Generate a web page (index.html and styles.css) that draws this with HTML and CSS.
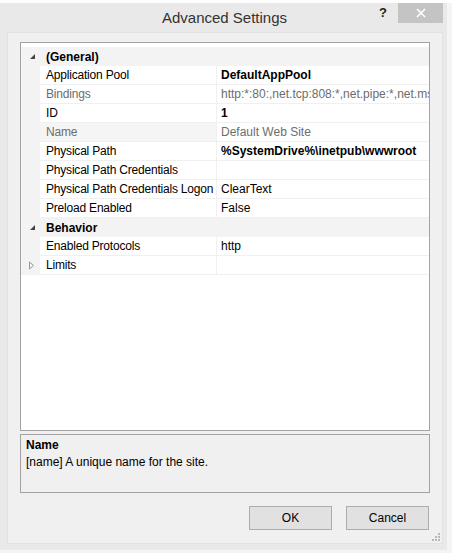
FILE: index.html
```html
<!DOCTYPE html>
<html>
<head>
<meta charset="utf-8">
<link rel="stylesheet" href="styles.css">
</head>
<body>
<div class="screen">
  <div class="bgstrip"></div>
  <div class="window">
    <div class="titlebar">
      <div class="title">Advanced Settings</div>
      <div class="help">?</div>
      <div class="close">
        <svg width="10" height="10" viewBox="0 0 10 10"><path d="M1 1 L9 9 M9 1 L1 9" stroke="#fff" stroke-width="1.6"/></svg>
      </div>
    </div>
    <div class="client">
      <div class="grid">
        <div class="row cat">
          <div class="gutter"><svg class="exp" width="7" height="7" viewBox="0 0 7 7"><path d="M6 1 L6 6 L1 6 Z" fill="#444"/></svg></div>
          <div class="catname">(General)</div>
        </div>
        <div class="row">
          <div class="gutter"></div>
          <div class="name">Application Pool</div>
          <div class="value bold">DefaultAppPool</div>
        </div>
        <div class="row">
          <div class="gutter"></div>
          <div class="name dim">Bindings</div>
          <div class="value dim">http:*:80:,net.tcp:808:*,net.pipe:*,net.ms</div>
        </div>
        <div class="row">
          <div class="gutter"></div>
          <div class="name">ID</div>
          <div class="value bold">1</div>
        </div>
        <div class="row sel">
          <div class="gutter"></div>
          <div class="name dim">Name</div>
          <div class="value dim">Default Web Site</div>
        </div>
        <div class="row">
          <div class="gutter"></div>
          <div class="name">Physical Path</div>
          <div class="value bold">%SystemDrive%\inetpub\wwwroot</div>
        </div>
        <div class="row">
          <div class="gutter"></div>
          <div class="name">Physical Path Credentials</div>
          <div class="value"></div>
        </div>
        <div class="row">
          <div class="gutter"></div>
          <div class="name">Physical Path Credentials Logon</div>
          <div class="value">ClearText</div>
        </div>
        <div class="row">
          <div class="gutter"></div>
          <div class="name">Preload Enabled</div>
          <div class="value">False</div>
        </div>
        <div class="row cat">
          <div class="gutter"><svg class="exp" width="7" height="7" viewBox="0 0 7 7"><path d="M6 1 L6 6 L1 6 Z" fill="#444"/></svg></div>
          <div class="catname">Behavior</div>
        </div>
        <div class="row">
          <div class="gutter"></div>
          <div class="name">Enabled Protocols</div>
          <div class="value">http</div>
        </div>
        <div class="row">
          <div class="gutter"><svg class="col" width="7" height="9" viewBox="0 0 7 9"><path d="M1.5 1 L5.5 4.5 L1.5 8 Z" fill="none" stroke="#999" stroke-width="1"/></svg></div>
          <div class="name">Limits</div>
          <div class="value"></div>
        </div>
      </div>
      <div class="desc">
        <div class="desc-title">Name</div>
        <div class="desc-text">[name] A unique name for the site.</div>
      </div>
      <div class="buttons">
        <div class="btn">OK</div>
        <div class="btn">Cancel</div>
      </div>
      <svg class="grip" width="8" height="8" viewBox="0 0 8 8">
        <rect x="6" y="0" width="2" height="2" fill="#b8b8b8"/>
        <rect x="3" y="3" width="2" height="2" fill="#b8b8b8"/>
        <rect x="6" y="3" width="2" height="2" fill="#b8b8b8"/>
        <rect x="0" y="6" width="2" height="2" fill="#b8b8b8"/>
        <rect x="3" y="6" width="2" height="2" fill="#b8b8b8"/>
        <rect x="6" y="6" width="2" height="2" fill="#b8b8b8"/>
      </svg>
    </div>
  </div>
</div>
</body>
</html>
```
FILE: styles.css
```css
html, body {
  margin: 0;
  padding: 0;
  background: #f4f4f4;
}
body {
  font-family: "Liberation Sans", Arial, sans-serif;
  font-size: 12px;
  color: #000;
}
.screen {
  width: 452px;
  height: 553px;
  overflow: hidden;
  display: flex;
  flex-direction: column;
}
.bgstrip {
  height: 3px;
  background: #fff;
}
.window {
  width: 447px;
  height: 547px;
  background: #e9e9e9;
  display: flex;
  flex-direction: column;
  box-sizing: border-box;
}
.titlebar {
  height: 29px;
  position: relative;
  display: flex;
  align-items: center;
  justify-content: center;
}
.title {
  font-size: 15px;
  color: #333;
  margin-left: 2px;
}
.help {
  position: absolute;
  left: 379px;
  top: 2px;
  font-weight: bold;
  font-size: 13px;
  color: #222;
}
.close {
  position: absolute;
  left: 398px;
  top: 0;
  width: 45px;
  height: 20px;
  background: #c4c4c4;
  display: flex;
  align-items: center;
  justify-content: center;
}
.client {
  margin: 0 4px 6px 7px;
  flex: 1;
  background: #f0f0f0;
  border: 1px solid #e2e2e2;
  padding: 9px 12px 0 12px;
  display: flex;
  flex-direction: column;
  position: relative;
}
.grid {
  height: 389px;
  box-sizing: border-box;
  border: 1px solid #a3a3a3;
  background: #fff;
  padding-top: 4px;
  display: flex;
  flex-direction: column;
}
.row {
  height: 19px;
  display: flex;
  align-items: stretch;
}
.gutter {
  width: 19px;
  background: #f3f3f3;
  display: flex;
  align-items: center;
  justify-content: center;
  flex: none;
}
.gutter .exp {
  margin-left: 3px;
}
.gutter .col {
  margin-left: 2px;
}
.name {
  width: 170px;
  flex: none;
  padding-left: 6px;
  border-right: 1px solid #f0f0f0;
  border-bottom: 1px solid #f0f0f0;
  display: flex;
  align-items: center;
  white-space: nowrap;
  letter-spacing: -0.2px;
}
.value {
  flex: 1;
  min-width: 0;
  padding-left: 4px;
  border-bottom: 1px solid #f0f0f0;
  display: flex;
  align-items: center;
  white-space: nowrap;
  overflow: hidden;
}
.row.cat {
  background: #f3f3f3;
}
.catname {
  font-weight: bold;
  padding-left: 6px;
  display: flex;
  align-items: center;
}
.row.sel .name {
  background: #f5f5f5;
}
.bold {
  font-weight: bold;
}
.dim {
  color: #6d6d6d;
}
.desc {
  margin-top: 3px;
  height: 59px;
  box-sizing: border-box;
  border: 1px solid #a3a3a3;
  background: #f0f0f0;
  padding: 2px 5px;
}
.desc-title {
  font-weight: bold;
  line-height: 16px;
}
.desc-text {
  line-height: 19px;
}
.buttons {
  margin-top: 13px;
  display: flex;
  justify-content: flex-end;
  gap: 14px;
  padding-right: 1px;
}
.btn {
  width: 83px;
  height: 24px;
  box-sizing: border-box;
  background: #e1e1e1;
  border: 1px solid #adadad;
  display: flex;
  align-items: center;
  justify-content: center;
}
.grip {
  position: absolute;
  right: 2px;
  bottom: 2px;
}
```
